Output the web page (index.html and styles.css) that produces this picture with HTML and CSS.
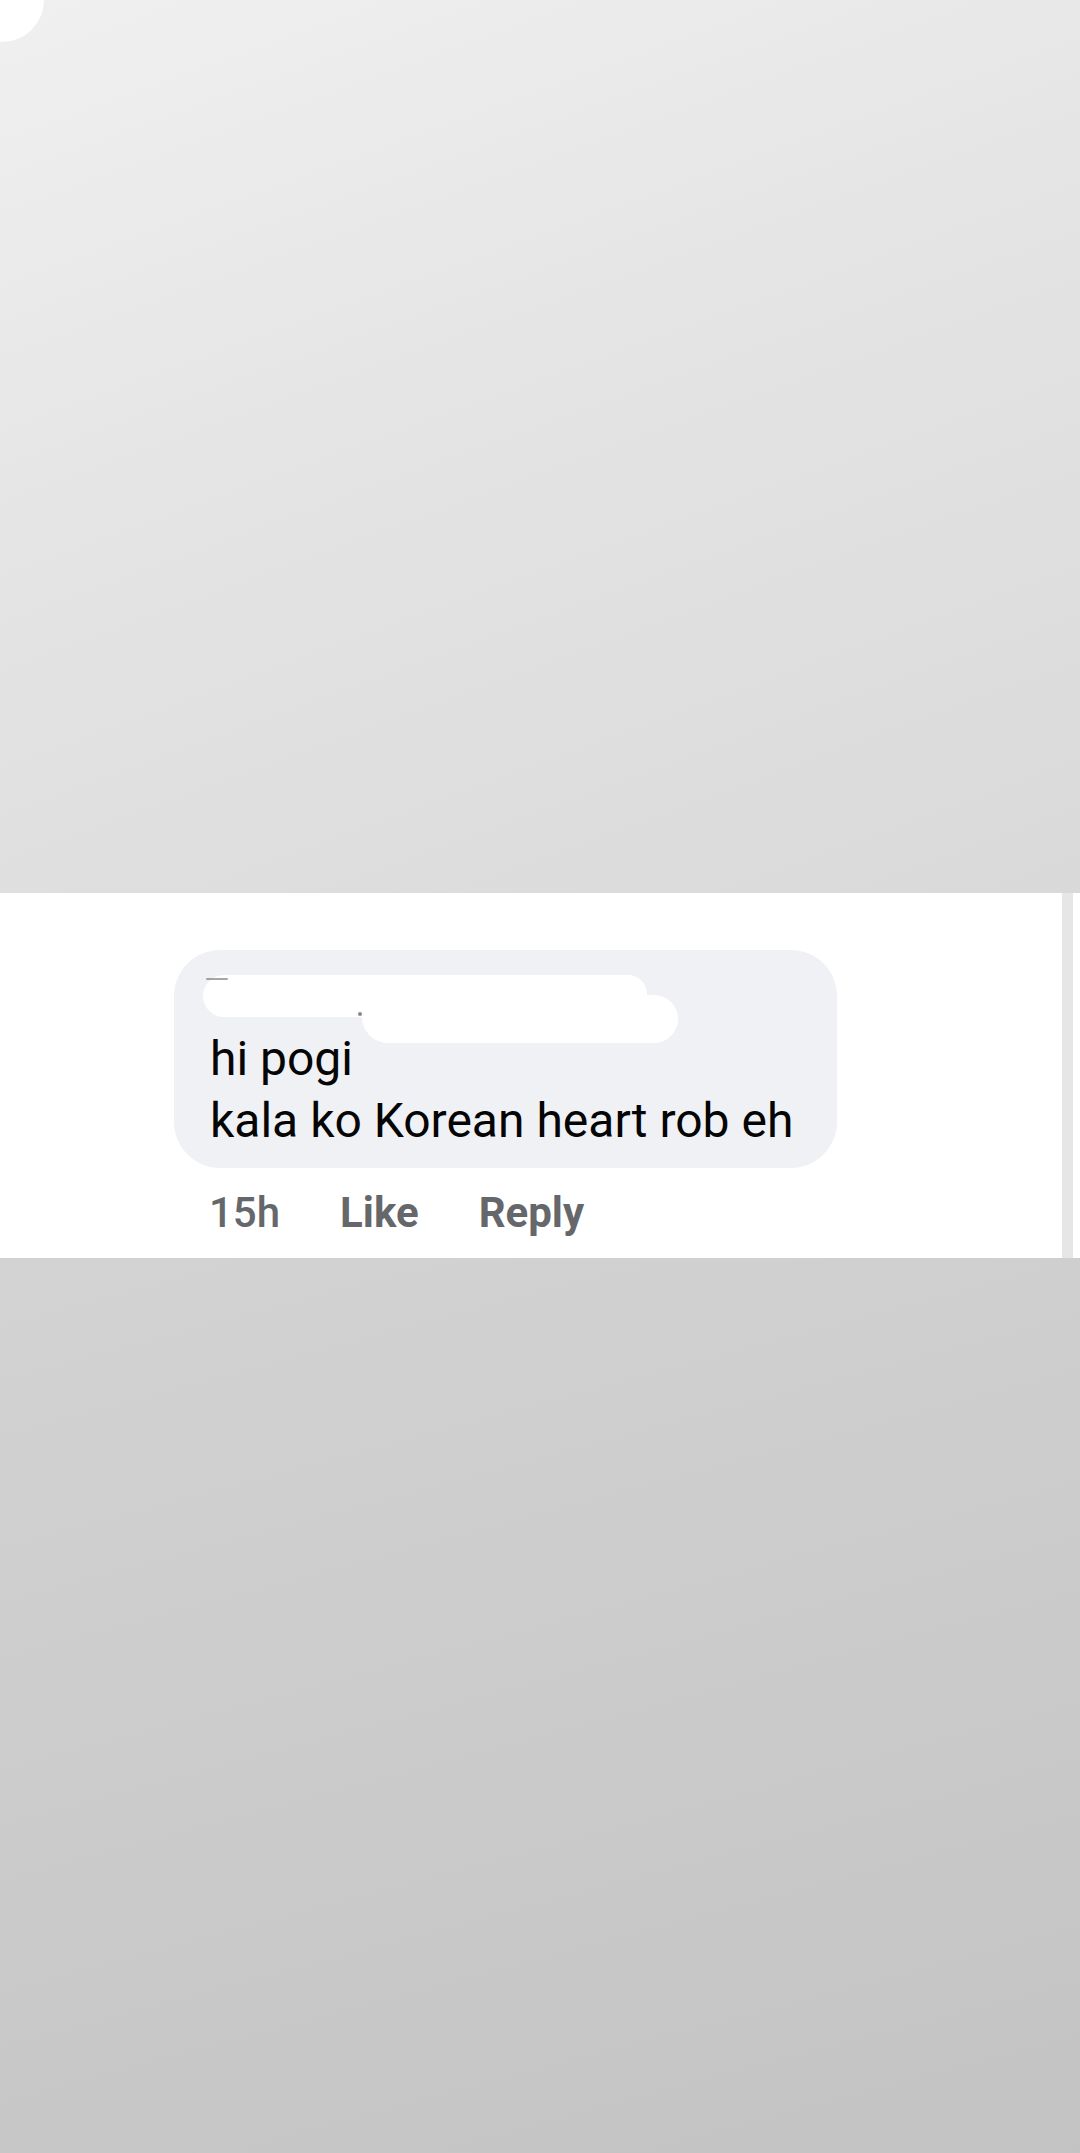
FILE: index.html
```html
<!DOCTYPE html>
<html>
<head>
<meta charset="utf-8">
<link rel="stylesheet" href="styles.css">
</head>
<body>
<div class="screen">
  <div class="media media-top">
    <div class="corner-dot"></div>
  </div>
  <div class="comment-row">
    <div class="comment">
      <div class="bubble">
        <div class="name-line">
          <span class="redact redact-a"></span>
          <span class="redact redact-b"></span>
          <span class="remnant remnant-a"></span>
          <span class="remnant remnant-b"></span>
        </div>
        <div class="comment-text">
          <div>hi pogi</div>
          <div>kala ko Korean heart rob eh</div>
        </div>
      </div>
      <div class="actions">
        <span class="time">15h</span>
        <span class="action">Like</span>
        <span class="action">Reply</span>
      </div>
    </div>
    <div class="scrollbar"></div>
  </div>
  <div class="media media-bottom"></div>
</div>
</body>
</html>
```

FILE: styles.css
```css
html, body {
  margin: 0;
  padding: 0;
}
body {
  width: 1080px;
  height: 2153px;
  overflow: hidden;
  font-family: Roboto, "Liberation Sans", Arial, sans-serif;
}
.screen {
  display: flex;
  flex-direction: column;
  width: 1080px;
  height: 2153px;
}
.media {
  width: 1080px;
  flex: none;
}
.media-top {
  position: relative;
  height: 893px;
  overflow: hidden;
  background: linear-gradient(160deg, #f0f0f0 0%, #e4e4e4 45%, #d9d9d9 100%);
}
.corner-dot {
  position: absolute;
  left: -40px;
  top: -42px;
  width: 84px;
  height: 84px;
  border-radius: 50%;
  background: #ffffff;
}
.comment-row {
  height: 365px;
  flex: none;
  display: flex;
  background: #ffffff;
}
.comment {
  flex: 1;
  padding: 57px 0 0 174px;
}
.bubble {
  width: 663px;
  height: 218px;
  box-sizing: border-box;
  padding: 0 0 0 36px;
  border-radius: 46px;
  background: #f0f1f5;
  position: relative;
}
.name-line {
  height: 78px;
}
.redact {
  position: absolute;
  background: #ffffff;
}
.redact-a {
  left: 29px;
  top: 25px;
  width: 444px;
  height: 42px;
  border-radius: 22px 20px 18px 22px;
}
.redact-b {
  left: 188px;
  top: 45px;
  width: 316px;
  height: 48px;
  border-radius: 14px 24px 24px 26px;
}
.remnant {
  position: absolute;
  background: #6b6b6b;
}
.remnant-a {
  left: 32px;
  top: 28px;
  width: 22px;
  height: 2px;
  border-radius: 2px;
  opacity: 0.6;
}
.remnant-b {
  left: 184px;
  top: 62px;
  width: 4px;
  height: 4px;
  border-radius: 2px;
  opacity: 0.8;
}
.comment-text {
  font-size: 48px;
  line-height: 62px;
  color: #050505;
  white-space: nowrap;
}
.actions {
  display: flex;
  gap: 60px;
  margin: 21px 0 0 35px;
  font-size: 42px;
  line-height: 48px;
  color: #65676b;
}
.time {
  font-weight: 500;
}
.action {
  font-weight: 700;
}
.scrollbar {
  width: 11px;
  margin-right: 7px;
  background: #e6e6e6;
}
.media-bottom {
  height: 895px;
  background: linear-gradient(165deg, #d3d3d3 0%, #cbcbcb 50%, #c3c3c3 100%);
}
```
